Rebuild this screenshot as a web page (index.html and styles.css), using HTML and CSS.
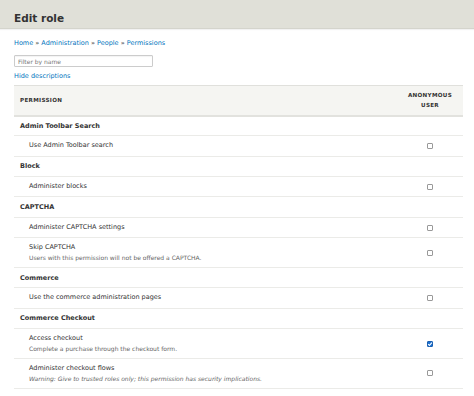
FILE: index.html
```html
<!DOCTYPE html>
<html>
<head>
<meta charset="utf-8">
<link rel="stylesheet" href="styles.css">
</head>
<body>
<header class="page-header"><h1>Edit role</h1></header>
<main class="content">
  <nav class="breadcrumb"><a href="#">Home</a> » <a href="#">Administration</a> » <a href="#">People</a> » <a href="#">Permissions</a></nav>
  <div class="filter"><input type="text" placeholder="Filter by name"></div>
  <a class="toggle" href="#">Hide descriptions</a>
  <table class="perms">
    <thead>
      <tr><th class="name">Permission</th><th class="role">Anonymous<br>user</th></tr>
    </thead>
    <tbody>
      <tr class="module"><td colspan="2">Admin Toolbar Search</td></tr>
      <tr class="perm"><td class="name"><div class="title">Use Admin Toolbar search</div></td><td class="check"><span class="cb"></span></td></tr>
      <tr class="module"><td colspan="2">Block</td></tr>
      <tr class="perm"><td class="name"><div class="title">Administer blocks</div></td><td class="check"><span class="cb"></span></td></tr>
      <tr class="module"><td colspan="2">CAPTCHA</td></tr>
      <tr class="perm"><td class="name"><div class="title">Administer CAPTCHA settings</div></td><td class="check"><span class="cb"></span></td></tr>
      <tr class="perm with-desc"><td class="name"><div class="title">Skip CAPTCHA</div><div class="desc">Users with this permission will not be offered a CAPTCHA.</div></td><td class="check"><span class="cb"></span></td></tr>
      <tr class="module"><td colspan="2">Commerce</td></tr>
      <tr class="perm"><td class="name"><div class="title">Use the commerce administration pages</div></td><td class="check"><span class="cb"></span></td></tr>
      <tr class="module"><td colspan="2">Commerce Checkout</td></tr>
      <tr class="perm with-desc"><td class="name"><div class="title">Access checkout</div><div class="desc">Complete a purchase through the checkout form.</div></td><td class="check"><span class="cb checked"><svg viewBox="0 0 8 8" width="6" height="6"><path d="M1.5 4.2 L3.3 5.9 L6.5 2.2" fill="none" stroke="#fff" stroke-width="1.4"/></svg></span></td></tr>
      <tr class="perm with-desc"><td class="name"><div class="title">Administer checkout flows</div><div class="desc"><em>Warning: Give to trusted roles only; this permission has security implications.</em></div></td><td class="check"><span class="cb"></span></td></tr>
      <tr class="perm"><td class="name"><div class="title">&nbsp;</div></td><td class="check"></td></tr>
    </tbody>
  </table>
</main>
</body>
</html>
```
FILE: styles.css
```css
* { box-sizing: border-box; }
html, body { margin: 0; padding: 0; background: #fff; }
body {
  font-family: "DejaVu Sans", "Liberation Sans", sans-serif;
  color: #333;
  font-size: 6.5px;
  overflow: hidden;
  height: 396px;
}
a { color: #0074bd; text-decoration: none; }
.page-header {
  background: #e0e0d8;
  height: 29px;
  padding: 0 14px;
  display: flex;
  align-items: center;
  border-bottom: 1px solid #d4d4cc;
  box-shadow: 0 1px 1px rgba(0,0,0,0.05);
}
.page-header h1 {
  margin: 0;
  font-size: 10.5px;
  font-weight: bold;
  color: #333;
  padding-top: 8px;
}
.content { padding: 9px 11px 0 14px; }
.breadcrumb { line-height: 9px; margin-top: 1px; }
.filter { margin-top: 7px; }
.filter input {
  width: 139px;
  height: 12px;
  border: 1px solid #ccc;
  border-radius: 1px;
  font-family: inherit;
  font-size: 6px;
  padding: 0 3px;
  color: #666;
  box-shadow: inset 0 1px 1px rgba(0,0,0,0.05);
}
.filter input::placeholder { color: #777; }
.toggle { display: block; margin-top: 5px; line-height: 9px; }
.perms {
  margin-top: 4px;
  width: 100%;
  border-collapse: collapse;
}
.perms th {
  background: #f5f5f2;
  border-top: 1px solid #e0e0dc;
  border-bottom: 2px solid #e2e2de;
  text-transform: uppercase;
  font-size: 5.6px;
  font-weight: bold;
  letter-spacing: 0.3px;
  color: #333;
  height: 30px;
  padding: 0 6px;
  line-height: 10px;
}
.perms th.name { text-align: left; }
.perms th.role { text-align: center; width: 66px; }
.perms td { border-bottom: 1px solid #ebebe8; }
.module td {
  height: 20.3px;
  font-weight: bold;
  padding: 0 6px;
  font-size: 6.5px;
}
.perm td { height: 20.3px; }
.perm td.name { padding: 4.2px 6px 4.2px 15px; }
.perm.with-desc td.name { padding-bottom: 3.2px; }
.perm .title { line-height: 11px; }
.perm .desc { line-height: 10.5px; color: #666; font-size: 6px; }
.perm td.check { text-align: center; }
.cb {
  display: inline-block;
  width: 6px;
  height: 6px;
  border: 1px solid #999;
  border-radius: 1px;
  background: #fff;
  vertical-align: middle;
  position: relative;
}
.cb.checked {
  background: #1a6fd0;
  border-color: #1a5fb0;
}
.cb svg { position: absolute; left: -1px; top: -1px; }
```
